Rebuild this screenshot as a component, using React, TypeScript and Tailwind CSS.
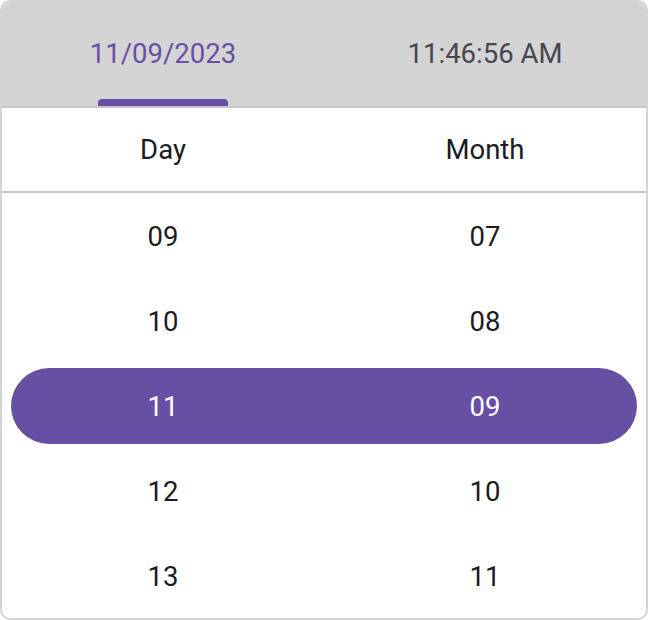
import React from "react";

const rows = [
  ["09", "07"],
  ["10", "08"],
  ["11", "09"],
  ["12", "10"],
  ["13", "11"],
];

export default function App() {
  return (
    <div className="w-[648px] h-[620px] bg-white" style={{ fontFamily: "Roboto, 'Noto Sans', sans-serif" }}>
      <div className="w-full h-full border-2 border-[#d4d4d4] rounded-[10px] overflow-hidden flex flex-col">
        <div className="h-[104px] bg-[#d4d4d4] grid grid-cols-2 shrink-0">
          <div className="flex flex-col items-center">
            <div className="flex-1 flex items-center pt-[6px] text-[27.5px] text-[#6750a4]">11/09/2023</div>
            <div className="w-[130px] h-[7px] bg-[#6750a4] rounded-t-[4px]"></div>
          </div>
          <div className="flex flex-col items-center">
            <div className="flex-1 flex items-center pt-[6px] pb-[7px] text-[27.5px] text-[#49454f]">11:46:56 AM</div>
          </div>
        </div>
        <div className="h-[2px] bg-[#cac4d0] shrink-0"></div>
        <div className="h-[83px] grid grid-cols-2 shrink-0 text-[27.5px] text-[#1c1b1f]">
          <div className="flex items-center justify-center">Day</div>
          <div className="flex items-center justify-center">Month</div>
        </div>
        <div className="h-[2px] bg-[#cac4d0] shrink-0"></div>
        <div className="flex flex-col">
          {rows.map(([d, m], i) => {
            const sel = i === 2;
            return (
              <div key={i} className="relative h-[85px]">
                {sel && <div className="absolute left-[9px] right-[9px] top-[5px] bottom-[4px] rounded-full bg-[#6750a4]"></div>}
                <div
                  className={
                    sel
                      ? "relative h-full grid grid-cols-2 text-white text-[27.5px] pt-[3px]"
                      : "relative h-full grid grid-cols-2 text-[#1c1b1f] text-[27.5px] pt-[3px]"
                  }
                >
                  <div className="flex items-center justify-center">{d}</div>
                  <div className="flex items-center justify-center">{m}</div>
                </div>
              </div>
            );
          })}
        </div>
      </div>
    </div>
  );
}
